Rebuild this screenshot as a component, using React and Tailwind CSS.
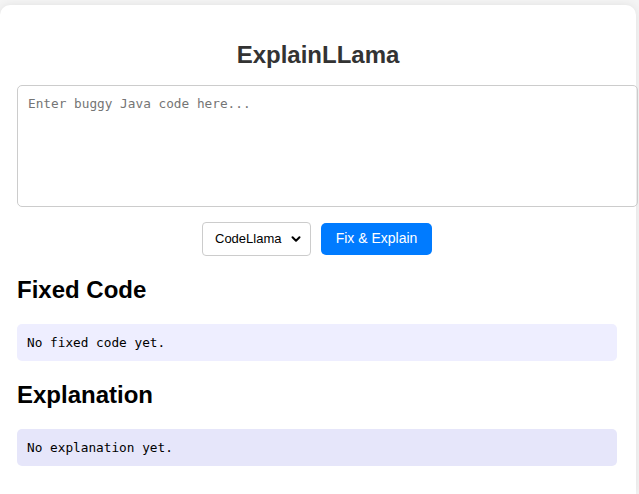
import React, { useState } from 'react';

const MONO = "font-['DejaVu_Sans_Mono',monospace]";

function Chevron() {
  return (
    <svg className="w-[10px] h-[10px] text-black" viewBox="0 0 10 10" fill="none" stroke="currentColor">
      <path d="M1.5 3.2 L5 6.7 L8.5 3.2" strokeWidth="2" strokeLinecap="round" strokeLinejoin="round" />
    </svg>
  );
}

export default function App() {
  const [code, setCode] = useState('');
  const [model, setModel] = useState('codellama');

  return (
    <div className="min-h-screen bg-[#f4f4f4] pt-[5px] font-['Liberation_Sans',Arial,sans-serif] overflow-hidden">
      <div className="w-[636px] min-h-[489px] bg-white rounded-t-[10px] shadow-[0_0_8px_rgba(0,0,0,0.08)] px-[17px] pt-[20px] pb-[20px]">
        <h1 className="mt-[16px] mb-[16px] text-center text-[24px] leading-[27.6px] font-bold text-[#333]">
          ExplainLLama
        </h1>

        {/* Code input */}
        <textarea
          value={code}
          onChange={(e) => setCode(e.target.value)}
          placeholder="Enter buggy Java code here..."
          className={`block w-[621px] h-[122px] resize-none rounded-[5px] border border-[#ccc] px-[10px] py-[9px] text-[12.75px] leading-[17px] ${MONO} placeholder:text-[#757575] outline-none`}
        />

        {/* Controls */}
        <div className="flex items-center justify-center gap-[10px] mt-[15px] pr-[2px]">
          <div className="relative">
            <select
              value={model}
              onChange={(e) => setModel(e.target.value)}
              className="appearance-none w-[109px] h-[34px] rounded-[4px] border border-[#ccc] bg-white pl-[12px] pr-[24px] text-[13px] text-black outline-none"
            >
              <option value="codellama">CodeLlama</option>
              <option value="llama3">Llama 3</option>
            </select>
            <span className="pointer-events-none absolute right-[10px] top-1/2 -translate-y-1/2">
              <Chevron />
            </span>
          </div>
          <button className="w-[111px] h-[32px] rounded-[5px] bg-[#007bff] text-white text-[14px]">
            Fix &amp; Explain
          </button>
        </div>

        <h2 className="mt-[20px] mb-[21px] text-[24px] leading-[27.6px] font-bold text-black">Fixed Code</h2>
        <pre className={`w-[600px] rounded-[5px] bg-[#eeeeff] px-[10px] py-[10px] text-[12.75px] leading-[17px] text-black ${MONO}`}>
          No fixed code yet.
        </pre>

        <h2 className="mt-[20px] mb-[20px] text-[24px] leading-[27.6px] font-bold text-black">Explanation</h2>
        <pre className={`w-[600px] rounded-[5px] bg-[#e6e6fa] px-[10px] py-[10px] text-[12.75px] leading-[17px] text-black ${MONO}`}>
          No explanation yet.
        </pre>
      </div>
    </div>
  );
}
